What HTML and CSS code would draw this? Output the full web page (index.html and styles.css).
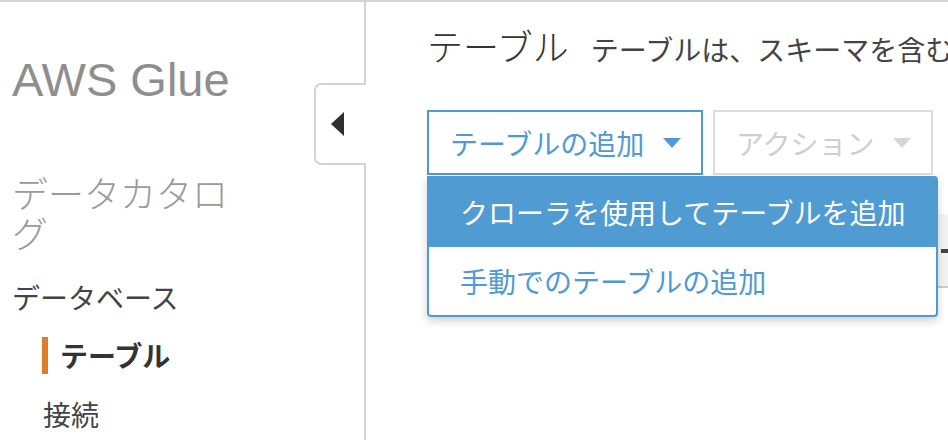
FILE: index.html
```html
<!DOCTYPE html>
<html lang="ja">
<head>
    <meta charset="UTF-8">
    <title>AWS Glue - テーブル</title>
    <link rel="stylesheet" href="styles.css">
</head>
<body>
<div class="page">
    <aside class="sidebar">
        <div class="brand">AWS Glue</div>
        <div class="section-title">データカタログ</div>
        <ul class="nav">
            <li class="nav-item">データベース</li>
            <li class="nav-item sub active">テーブル</li>
            <li class="nav-item sub">接続</li>
        </ul>
        <div class="collapse-tab"><span class="arrow-left"></span></div>
    </aside>

    <main class="main">
        <div class="title-row">
            <h1 class="title">テーブル</h1>
            <span class="subtitle">テーブルは、スキーマを含むメタデータの定義です。</span>
        </div>

        <div class="toolbar">
            <div class="btn btn-primary">テーブルの追加 <span class="caret"></span></div>
            <div class="btn btn-disabled">アクション <span class="caret"></span></div>

            <ul class="dropdown">
                <li class="dropdown-item selected">クローラを使用してテーブルを追加</li>
                <li class="dropdown-item">手動でのテーブルの追加</li>
            </ul>
        </div>

        <div class="table-head">
            <span class="head-mark"></span>
        </div>
    </main>
</div>
</body>
</html>
```

FILE: styles.css
```css
body {
    margin: 0;
    font-family: "Noto Sans CJK JP", "Noto Sans", sans-serif;
    background-color: #ffffff;
    overflow: hidden;
}

.page {
    display: flex;
    height: 438px;
    border-top: 2px solid #d3d3d3;
}

/* 左侧导航 */
.sidebar {
    position: relative;
    width: 352px;
    flex-shrink: 0;
    padding-left: 12px;
    border-right: 2px solid #d3d3d3;
}

.brand {
    margin-top: 52px;
    font-family: "Liberation Sans", Arial, sans-serif;
    font-size: 47px;
    line-height: 52px;
    color: #8e8e8e;
}

.section-title {
    width: 240px;
    margin-top: 66px;
    font-size: 36px;
    font-weight: 300;
    line-height: 40px;
    color: #9a9a9a;
}

.nav {
    list-style: none;
    margin: 25px 0 0;
    padding: 0;
}

.nav-item {
    font-size: 28px;
    line-height: 40px;
    color: #444444;
}

.nav-item.sub {
    margin-top: 20px;
    margin-left: 31px;
}

.nav-item.active {
    margin-left: 30px;
    padding-left: 12px;
    border-left: 6px solid #dd7d2b;
    line-height: 37px;
    font-weight: bold;
    color: #333333;
}

.collapse-tab {
    position: absolute;
    top: 81px;
    right: -2px;
    width: 48px;
    height: 78px;
    display: flex;
    align-items: center;
    justify-content: center;
    padding-right: 2px;
    background-color: #ffffff;
    border: 2px solid #d3d3d3;
    border-right: none;
    border-radius: 7px 0 0 7px;
    box-sizing: content-box;
}

.arrow-left {
    width: 0;
    height: 0;
    margin-right: 6px;
    border-top: 12px solid transparent;
    border-bottom: 12px solid transparent;
    border-right: 13px solid #2f2f2f;
}

/* 主区域 */
.main {
    flex: 1;
    min-width: 0;
    padding-left: 61px;
    overflow: hidden;
}

.title-row {
    display: flex;
    align-items: baseline;
    margin-top: 21px;
    white-space: nowrap;
}

.title {
    margin: 0;
    font-size: 36px;
    font-weight: 300;
    line-height: 44px;
    color: #333333;
}

.subtitle {
    margin-left: 22px;
    font-size: 28px;
    color: #444444;
}

.toolbar {
    position: relative;
    display: flex;
    gap: 10px;
    margin-top: 41px;
}

.btn {
    display: flex;
    align-items: center;
    height: 61px;
    box-sizing: content-box;
    padding: 0 20px 0 21px;
    font-size: 28px;
    white-space: nowrap;
}

.btn-primary {
    width: 231px;
    border: 2px solid #4f9ad4;
    color: #4f9ad4;
}

.btn-disabled {
    width: 175px;
    border: 2px solid #dcdcdc;
    color: #cfcfcf;
}

.caret {
    width: 0;
    height: 0;
    margin-left: auto;
    border-left: 9px solid transparent;
    border-right: 9px solid transparent;
    border-top: 10px solid #4f9ad4;
}

.btn-disabled .caret {
    border-top-color: #d6d6d6;
}

.dropdown {
    position: absolute;
    top: 66px;
    left: 0;
    z-index: 2;
    width: 507px;
    margin: 0;
    padding: 0;
    list-style: none;
    background-color: #ffffff;
    border: 2px solid #4f9ad4;
    border-radius: 0 4px 4px 4px;
    box-shadow: 0 4px 8px rgba(0, 0, 0, 0.18);
}

.dropdown-item {
    height: 68px;
    line-height: 68px;
    padding-left: 31px;
    font-size: 28px;
    color: #4f9ad4;
}

.dropdown-item.selected {
    height: 69px;
    line-height: 69px;
    background-color: #519bd3;
    color: #ffffff;
}

/* 下拉菜单下面的表头 */
.table-head {
    height: 37px;
    margin-top: 39px;
    padding-top: 35px;
    background-color: #f3f3f3;
    border-bottom: 2px solid #cccccc;
}

.head-mark {
    display: block;
    width: 20px;
    height: 4px;
    margin-left: 514px;
    background-color: #444444;
}
```
